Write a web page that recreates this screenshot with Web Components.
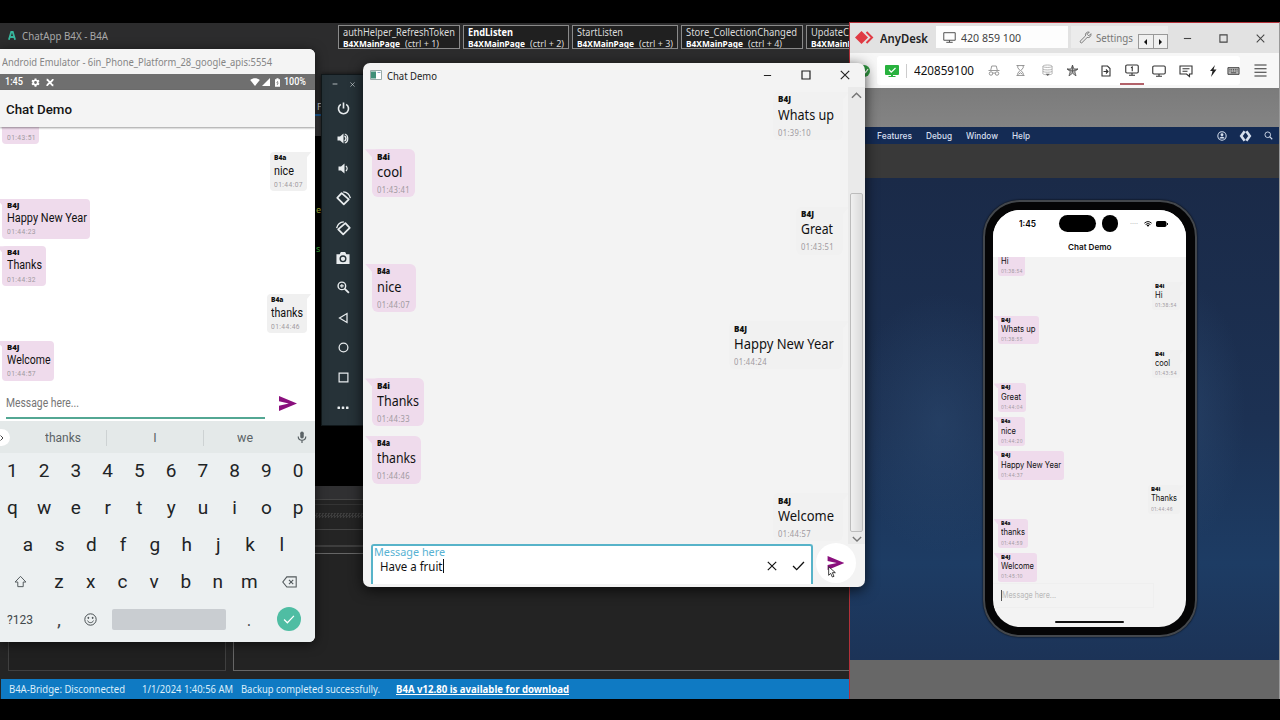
<!DOCTYPE html>
<html lang="en">
<head>
<meta charset="utf-8">
<title>Chat Demo</title>
<style>
html,body{margin:0;height:100%;background:#000;overflow:hidden}
</style>
</head>
<body>
<demo-desktop></demo-desktop>
<script>
const fits = [];
function define(name, css, html, after) {
  const tpl = document.createElement('template');
  tpl.innerHTML = `<style>*{box-sizing:border-box}:host{display:block;box-sizing:border-box}.r{display:flex;align-items:center}${css}</style>${html}`;
  customElements.define(name, class extends HTMLElement {
    connectedCallback() {
      if (this.shadowRoot) return;
      this.attachShadow({ mode: 'open' }).append(document.importNode(tpl.content, true));
      if (after) after(this, this.shadowRoot);
    }
  });
}

/* a single line of text set to a given width */
define('fit-text', `:host{display:inline-block;white-space:nowrap;flex:none}span{display:inline-block;white-space:pre;transform-origin:0 50%}`,
  `<span><slot></slot></span>`, (el) => fits.push(el));

/* icons */
const S = (vb, body, w = 1.8) => `<svg viewBox="${vb}" fill="none" stroke="currentColor" stroke-width="${w}">${body}</svg>`;
const icons = {
  gear: S('0 0 24 24', '<circle cx="12" cy="12" r="6" stroke-width="4.500"/><path stroke-width="5" d="M12 1v5M12 18v5M2.500 6.500l4 2.500M17.500 15l4 2.500M2.500 17.500l4-2.500M17.500 9l4-2.500"/>'),
  xx: S('0 0 24 24', '<path stroke-width="5.500" d="M2 3c5 1 6 5 10 9s5 8 10 9M21 2c-1 5-5 6-9 10s-8 5-9 10"/>'),
  wifi: S('0 0 24 20', '<path fill="currentColor" stroke="none" d="M12 20L0 5C7-1 17-1 24 5z"/>'),
  signal: S('0 0 20 20', '<path fill="currentColor" stroke="none" d="M20 0v20H0z"/>'),
  batt: S('0 0 14 24', '<path fill="currentColor" stroke="none" d="M4 0h6v3h4v21H0V3h4z"/><path stroke="#6f6f6f" stroke-width="2" d="M8 8l-3 5h4l-3 6"/>'),
  send: S('0 0 24 20', '<path fill="currentColor" stroke="none" d="M0 0l24 10L0 20V13l13-3L0 7z"/>'),
  mic: S('0 0 20 26', '<rect x="6.5" y="1" width="7" height="14" rx="3.5" fill="currentColor" stroke="none"/><path stroke-width="2.4" d="M2.5 11c0 10 15 10 15 0M10 18v6"/>'),
  chev: S('0 0 8 12', '<path d="M1 1l5 5-5 5"/>'),
  shift: S('0 0 24 24', '<path d="M12 2.5L2 13h5v8.500h10V13h5z"/>'),
  back: S('0 0 28 22', '<path d="M9 1.500h17.500v19H9L1.500 11zM13 7l8 8M21 7l-8 8" stroke-width="2"/>'),
  smile: S('0 0 24 24', '<circle cx="12" cy="12" r="10.500"/><path d="M6.500 14c2 5 9 5 11 0"/><circle cx="8" cy="9" r="1" fill="currentColor"/><circle cx="16" cy="9" r="1" fill="currentColor"/>'),
  check: S('0 0 14 11', '<path d="M1 5.500l4 4L13 1"/>', 1.5),
  power: S('0 0 24 24', '<path stroke-width="3" d="M7 4.500a9.300 9.300 0 1 0 10 0M12 1v11"/>'),
  vol2: S('0 0 24 22', '<path fill="currentColor" stroke="none" d="M0 7h5l7-6v20l-7-6H0z"/><path d="M14 6c4 2 4 8 0 10" stroke-width="3"/><path d="M14.500 2c8 2 8 16 0 18" stroke-width="2.500"/>'),
  vol1: S('0 0 24 22', '<path fill="currentColor" stroke="none" d="M3 7h5l7-6v20l-7-6H3z"/><path d="M18 6c3 3 3 7 0 10" stroke-width="2.500"/>'),
  rotl: S('0 0 24 24', '<path stroke-width="2.800" stroke-linejoin="round" d="M9 3.500L2 11l10.500 10.500 8-8z"/><path stroke-width="2.200" d="M11.500 1.300Q21 2 23 11.500"/>'),
  cam: S('0 0 24 22', '<path fill="currentColor" stroke="none" d="M0 4h6l2-4h8l2 4h6v18H0z"/><circle cx="12" cy="12.500" r="5.200" stroke="#263238" stroke-width="2.500"/>'),
  zoom: S('0 0 24 24', '<circle cx="9" cy="9" r="7" stroke-width="2.600"/><path d="M14 14l8 8" stroke-width="3.500"/><path d="M9 5.500v7M5.500 9h7" stroke-width="2"/>'),
  tri: S('0 0 20 24', '<path stroke-width="2.500" d="M18 3v18L3 12z"/>'),
  circ: S('0 0 20 20', '<circle cx="10" cy="10" r="8" stroke-width="2.300"/>'),
  sq: S('0 0 20 20', '<path stroke-width="2.200" d="M2 2h16v16H2z"/>'),
  dots: S('0 0 24 6', '<g fill="currentColor" stroke="none"><rect x="1" y="1" width="5" height="5" rx="1"/><rect x="9.500" y="1" width="5" height="5" rx="1"/><rect x="18" y="1" width="5" height="5" rx="1"/></g>'),
  min: S('0 0 10 10', '<path d="M1 5h8" stroke-width="1.200"/>'),
  max: S('0 0 10 10', '<path d="M1 1h8v8H1z" stroke-width="1.200"/>'),
  x: S('0 0 10 10', '<path d="M.8.8l8.400 8.400M9.200.8L.8 9.200" stroke-width="1.150"/>'),
  app: S('0 0 12 10', '<path fill="#fff" stroke="#9aaba8" stroke-width="1" d="M.5.5h11v9H.5z"/><path fill="#3f9078" stroke="none" d="M1 1.500h5v7H1z"/><path stroke="#89a7c4" stroke-width="1" d="M7.500 2.500h3"/>'),
  up: S('0 0 12 7', '<path d="M1 6l5-5 5 5" stroke-width="1.600"/>'),
  down: S('0 0 12 7', '<path d="M1 1l5 5 5-5" stroke-width="1.600"/>'),
  any: S('0 0 38 26', '<path fill="#e03a43" stroke="none" d="M13 0l13 13-13 13L0 13z"/><path stroke="#e03a43" stroke-width="4" d="M23 2l11 11-11 11"/>'),
  mon: S('0 0 28 24', '<path stroke-width="2" d="M1.500 1.500h25V18h-25zM14 18v4M7 22.500h14"/>'),
  mon1: S('0 0 28 24', '<path stroke-width="2.200" d="M4 2h20q2.500 0 2.500 2.500v11Q26.500 18 24 18H4q-2.500 0-2.500-2.500v-11Q1.500 2 4 2zM14 18v4M8 22.500h12M12 7.500L14.500 6v8.500"/>'),
  mon2: S('0 0 28 24', '<path stroke-width="2.200" d="M4 2h20q2.500 0 2.500 2.500v11Q26.500 18 24 18H4q-2.500 0-2.500-2.500v-11Q1.500 2 4 2zM14 18v4M8 22.500h12"/>'),
  wrench: S('0 0 24 24', '<path d="M2 19L12 9c-1-4 2-8 7-7l-4 4 3 3 4-4c1 5-3 8-7 7L5 22q-3 0-3-3z"/>'),
  gmon: S('0 0 28 24', '<path fill="#28b23e" stroke="none" d="M2 0h24q2 0 2 2v16q0 2-2 2H16v2h5v2H7v-2h5v-2H2q-2 0-2-2V2q0-2 2-2z"/><path stroke="#fff" stroke-width="2.400" d="M8 9.500l4.500 5L21 6"/>'),
  gball: S('0 0 24 24', '<circle cx="12" cy="12" r="12" fill="#2f9a40" stroke="none"/><path stroke="#fff" stroke-width="2.500" d="M11 11l4 4 5-7"/>'),
  spy: S('0 0 24 22', '<path stroke-width="1.700" d="M1 11h22M5.500 10L7.500 2h9l2 8M9 17c1-1.500 5-1.500 6 0"/><circle cx="6" cy="17" r="3.500"/><circle cx="18" cy="17" r="3.500"/>'),
  hour: S('0 0 20 24', '<path stroke-width="1.700" d="M1 1h18M1 23h18M4 1v5l5 6-5 6v5M16 1v5l-5 6 5 6v5M6 20l4-3 4 3"/>'),
  db: S('0 0 24 26', '<path stroke-width="1.600" d="M2 4c0-4 20-4 20 0v16c0 3-20 3-20 0zM2 4c0 3 20 3 20 0M2 9.500c0 3 20 3 20 0M2 14.500c0 3 20 3 20 0"/><path fill="#666" stroke="none" d="M8 20h9l-4.500 5z"/>'),
  star: S('0 0 24 24', '<path fill="#b5b5b5" stroke="#555" stroke-width="1.500" d="M12 2l2.700 7.200H22l-5.800 4.600L18.500 22 12 17l-6.500 5 2.300-8.200L2 9.200h7.300z"/><path stroke-width="1.300" d="M12 2v14M2 9.200l10 4 10-4"/>'),
  file: S('0 0 20 24', '<path stroke-width="2.200" d="M2 2h11l5 5v15H2zM5 13h9M10 9l4 4-4 4"/>'),
  chat: S('0 0 28 24', '<path stroke-width="2.200" d="M2 2h24v16h-5v5l-6-5H2zM7 7.500h14M7 12.500h10"/>'),
  bolt: S('0 0 16 24', '<path fill="#222" stroke="none" d="M12 0L2 12h5L4 24 15 9H9z"/>'),
  kbd: S('0 0 28 18', '<path stroke-width="2" fill="#bbb" d="M1.500 1.500h25v15h-25z"/><path stroke-width="2" stroke-dasharray="2 2" d="M5 5.500h19M5 9h19"/><path d="M8 13h12"/>'),
  menu: S('0 0 14 14', '<path stroke-width="1.100" d="M.5 1h13M.5 5h13M.5 9h13M.5 13h13"/>'),
  user: S('0 0 24 24', '<circle cx="12" cy="12" r="10" stroke-width="2.500"/><circle cx="12" cy="9" r="3.500" fill="currentColor" stroke="none"/><path fill="currentColor" stroke="none" d="M5.500 18c1-6 12-6 13 0z"/>'),
  kite: S('0 0 28 28', '<path stroke-width="6" d="M12 3L4 14l8 11M16 3l8 11-8 11"/>'),
  find: S('0 0 24 24', '<circle cx="10" cy="10" r="7.500" stroke-width="2.400"/><path stroke-width="3" d="M15 15l7 7"/>'),
  iwifi: S('0 0 20 14', '<path fill="currentColor" stroke="none" d="M10 14L6.500 10.500q3.500-3 7 0z"/><path stroke-width="2.400" d="M1 5q9-8 18 0M4 8.300q6-5 12 0"/>'),
  ibatt: S('0 0 24 12', '<rect x="0" y="0" width="21" height="12" rx="3.500" fill="currentColor" stroke="none"/><path d="M23 4v4"/>'),
  arrow: S('0 0 12 18', '<path fill="#fff" stroke="#222" stroke-width="1.300" d="M1 1v13l3-3 2.500 5.500 2.500-1L6.500 10H11z"/>'),
  logo: S('0 0 16 18', '<path stroke-width="3.600" d="M1.800 17.500L6.500 2h3l4.700 15.500M4.500 12h7"/>')
};
define('x-icon', `:host{display:block;flex:none}svg{display:block;width:100%;height:100%;overflow:visible}`, ``, (el, root) => {
  const t = document.createElement('template');
  t.innerHTML = icons[el.getAttribute('name')];
  root.append(t.content);
  if (el.hasAttribute('w')) el.style.width = el.getAttribute('w') + 'px';
  if (el.hasAttribute('h')) el.style.height = el.getAttribute('h') + 'px';
});

/* chat bubble: sizes come from custom properties of the list it is in */
define('chat-bubble', `
:host{height:var(--bh);flex:none;align-self:flex-start;margin-left:var(--ml);position:relative;background:var(--pink,#efdbec);border-radius:var(--br);padding:var(--pt) 0 0 var(--pl);color:#111}
:host([own]){align-self:flex-end;margin:0 var(--mr) 0 0;background:var(--own);padding-left:var(--plo,var(--pl))}
.tail{position:absolute;top:0;left:calc(var(--tail) * -1);width:calc(var(--tail) + 5px);height:calc(var(--tail) + 1px);background:inherit;clip-path:polygon(0 0,100% 0,100% 100%,var(--tail) 100%)}
:host([own]) .tail{left:auto;right:calc(var(--tail) * -1);clip-path:polygon(0 0,100% 0,5px 100%,0 100%)}
div{display:flex;align-items:center}
.n{height:var(--nh);font:800 var(--ns)/1 "Open Sans",sans-serif}
.m{height:var(--mh);font-size:var(--ms);line-height:1}
.t{height:var(--th);font:var(--ts)/1 var(--tf,"Noto Sans",sans-serif);letter-spacing:.4px;color:#a09aa0}`,
`<i class="tail"></i><div class="n"></div><div class="m"></div><div class="t"></div>`, (el, root) => {
  const a = n => el.getAttribute(n);
  el.style.width = a('bw') + 'px';
  const st = getComputedStyle(el);
  const put = (c, text, w) => root.querySelector(c).innerHTML = `<fit-text w="${w}">${text}</fit-text>`;
  put('.n', a('who'), parseFloat(st.getPropertyValue('--nw')));
  put('.m', a('msg'), a('mw'));
  put('.t', a('time'), parseFloat(st.getPropertyValue('--tw')));
});

define('status-bar', `:host{height:20px;background:#0f7ac3;color:#dceefa;font:10.500px/20px "Noto Sans","Open Sans",sans-serif;display:flex;padding-left:8px;margin-left:1px}
a{color:#fff;font-weight:700;text-decoration:underline}`,
`<fit-text w="116">B4A-Bridge: Disconnected</fit-text><fit-text w="91" style="margin-left:17px">1/1/2024 1:40:56 AM</fit-text><fit-text w="139" style="margin-left:8px">Backup completed successfully.</fit-text><fit-text w="173" style="margin-left:16px"><a>B4A v12.80 is available for download</a></fit-text>`);

define('call-tab', `:host{height:24px;border:1px solid #8a8a8a;background:#202020;color:#dcdcdc;padding:0 0 0 4px;overflow:hidden;flex:none;font:10.500px/13px "Noto Sans","Open Sans",sans-serif}
div{height:12px;line-height:13px;white-space:nowrap}.b{font-size:9.500px;display:flex;gap:5px;height:11px;line-height:12px}b{color:#fff}`,
`<div class="a"></div><div class="b"></div>`, (el, root) => {
  const a = n => el.getAttribute(n);
  el.style.width = a('bw') + 'px';
  const t = a('bold') !== null ? `<b>${a('name')}</b>` : a('name');
  root.querySelector('.a').innerHTML = `<fit-text w="${a('nw')}">${t}</fit-text>`;
  root.querySelector('.b').innerHTML = `<fit-text w="57"><b>B4XMainPage</b></fit-text>` + (a('key') ? `<fit-text w="34">(ctrl + ${a('key')})</fit-text>` : '');
});

define('ide-window', `:host{width:849px;height:676px;background:#242424;overflow:hidden;display:flex;flex-direction:column;font-family:"Noto Sans","Open Sans",sans-serif}
.top{height:79px;background:#2c2c2d;padding-left:8px;display:flex;align-items:flex-start;color:#a9a9a9;font-size:11px;line-height:14px;flex:none}
.ttl{width:330px;flex:none;padding-top:6px;display:flex;gap:6px}
.tabs{display:flex;gap:3px;padding-top:2px}
.strip{height:34px;background:linear-gradient(#2c2c2d 14px,#3a3a3c 14px);padding-left:317px;font-size:9px;line-height:9px;color:#ddd;flex:none}
.strip div{height:14px;border-bottom:2px solid #1c5f9c;margin-left:-2px;padding-left:2px}
.ed{height:350px;background:#000;font-size:9px;flex:none;padding:68px 0 0 316px}
.ed p{margin:0 0 27px;height:12px;line-height:12px}
.out{flex:1;background:#242424;display:flex;flex-direction:column}
.l1{height:14px;background:#303032;border-bottom:1px solid #454545}
.l2{height:5px;border-bottom:1px solid #343434}
.l3{height:5px;margin-top:8px;margin-bottom:2px;background:repeating-conic-gradient(#3d3d3d 0 25%,#262626 0 50%) 0 0/3px 3px}
.l4{height:10px;border-bottom:1px solid #444}.l5{height:17px;border-bottom:2px solid #3e3e3e}.l6{height:7px;border-bottom:1px solid #666}
.boxes{flex:1;display:flex;gap:7px;padding:0 0 8px 8px;border-bottom:0}
.b1{width:218px;border:1px solid #3f3f3f;background:#202020}.b2{flex:1;border:1px solid #666;border-right:0;border-top:0;background:#232323}`,
`<div class="top"><div class="ttl"><x-icon name="logo" w="8" h="9" style="color:#37b79d;margin-top:2px"></x-icon><fit-text w="86">ChatApp B4X - B4A</fit-text></div>
<div class="tabs"><call-tab name="authHelper_RefreshToken" nw="112" bw="122" key="1"></call-tab><call-tab name="EndListen" bold nw="45" bw="106" key="2"></call-tab><call-tab name="StartListen" nw="46" bw="106" key="3"></call-tab><call-tab name="Store_CollectionChanged" nw="111" bw="122" key="4"></call-tab><call-tab name="UpdateC" nw="38" bw="122"></call-tab></div></div>
<div class="strip"><div>F</div></div>
<div class="ed"><p style="color:#c3c93f">e</p><p style="color:#3fc03f">s</p></div>
<div class="out"><div class="l1"></div><div class="l2"></div><div class="l3"></div><div class="l4"></div><div class="l5"></div><div class="l6"></div><div class="boxes"><div class="b1"></div><div class="b2"></div></div></div>
<status-bar></status-bar>`);

define('key-row', `:host{display:flex;height:36.800px;align-items:center;font:19px/36px Roboto,sans-serif;color:#1e2426}span{width:31.750px;text-align:center;flex:none}`,
`<slot></slot>`, (el, root) => {
  const keys = el.getAttribute('keys').split('').map(k => `<span>${k}</span>`).join('');
  root.querySelector('slot').insertAdjacentHTML('beforebegin', `<slot name="pre"></slot>${keys}`);
});

define('android-phone', `:host{width:315px;height:593px;background:#fff;border-radius:0 6px 6px 0;overflow:hidden;display:flex;flex-direction:column;font-family:Roboto,sans-serif;box-shadow:0 2px 12px #0009}
.cap{height:25px;background:#f4f4f4;padding:6px 0 0 2px;font:10.500px/14px "Noto Sans","Open Sans",sans-serif;color:#858585;flex:none}
.stat{height:16px;background:#6f6f6f;color:#fff;font-weight:500;font-size:10.500px;line-height:16px;padding:0 9px 0 5px;flex:none}
.bar{height:37px;background:#f4f4f4;padding-left:6px;font:500 13.500px/38px Roboto,sans-serif;color:#151515;box-shadow:0 1px 2px #0006;z-index:1;flex:none}
.chat{height:261px;overflow:hidden;display:flex;flex-direction:column;justify-content:flex-end;gap:7.600px;padding-bottom:7.500px;flex:none;
--bh:39.700px;--ml:2px;--mr:8.500px;--br:4px;--own:#f0f0f0;--pt:2px;--pl:5px;--plo:4px;--tail:5px;--nh:10px;--ns:6.500px;--nw:12.500;--mh:14px;--ms:12px;--th:15.500px;--ts:6.500px;--tw:29;--tf:Roboto,sans-serif}
.in{height:34px;padding-left:6px;align-items:stretch;flex:none}
.f{width:259px;height:31px;border-bottom:2px solid #53a793;font-size:12px;line-height:31px;color:#757575}
.sug{height:32px;background:#e4e9e9;color:#5b6366;font-size:12.500px;flex:none;margin-top:-1px;z-index:1;padding-top:1px}
.sug i{width:1px;height:16px;background:#cdd2d3}.w{width:96px;display:flex;justify-content:center}
.go{width:10px;height:17px;border-radius:0 9px 9px 0;background:#fff;display:flex;align-items:center;color:#333}
.kb{flex:1;background:#ecf0f1;padding:0}
.last{height:38px;color:#42494c}
.sp{width:114px;height:21px;background:#c9cdd1;border-radius:2px;margin-left:15px}
.ok{width:24px;height:24px;border-radius:50%;background:#4fbda3;color:#fff;display:flex;align-items:center;justify-content:center;margin-left:26px}`,
`<div class="cap"><fit-text w="270">Android Emulator - 6in_Phone_Platform_28_google_apis:5554</fit-text></div>
<div class="stat r"><fit-text w="18">1:45</fit-text><x-icon name="gear" w="9" h="9" style="margin-left:8px"></x-icon><x-icon name="xx" w="8" h="9" style="margin-left:6px"></x-icon><x-icon name="wifi" w="10" h="8" style="margin-left:auto"></x-icon><x-icon name="signal" w="8" h="8" style="margin-left:2px"></x-icon><x-icon name="batt" w="5" h="9" style="margin:0 4px 0 5px"></x-icon><fit-text w="22">100%</fit-text></div>
<div class="bar"><fit-text w="66">Chat Demo</fit-text></div>
<div class="chat">
<chat-bubble who="B4i" msg="Great" time="01:43:51" bw="36.5" mw="29"></chat-bubble>
<chat-bubble own who="B4a" msg="nice" time="01:44:07" bw="37" mw="20"></chat-bubble>
<chat-bubble who="B4J" msg="Happy New Year" time="01:44:23" bw="88" mw="80"></chat-bubble>
<chat-bubble who="B4i" msg="Thanks" time="01:44:32" bw="44" mw="35"></chat-bubble>
<chat-bubble own who="B4a" msg="thanks" time="01:44:46" bw="39.5" mw="32"></chat-bubble>
<chat-bubble who="B4J" msg="Welcome" time="01:44:57" bw="52" mw="43.500"></chat-bubble></div>
<div class="in r"><div class="f"><fit-text w="73">Message here...</fit-text></div><x-icon name="send" w="18" h="15" style="color:#8a0f7d;margin:8px 0 0 14px"></x-icon></div>
<div class="sug r"><div class="go"><x-icon name="chev" w="4" h="8"></x-icon></div><div class="w" style="padding-left:9px"><fit-text w="36">thanks</fit-text></div><i></i><div class="w">I</div><i></i><div class="w" style="width:82px"><fit-text w="16">we</fit-text></div><x-icon name="mic" w="10" h="13" style="margin-left:11px"></x-icon></div>
<div class="kb"><key-row keys="1234567890" style="margin-left:-3.500px"></key-row><key-row keys="qwertyuiop" style="margin-left:-3.500px"></key-row><key-row keys="asdfghjkl" style="margin-left:12px"></key-row>
<key-row keys="zxcvbnm"><x-icon slot="pre" name="shift" w="13" h="13" style="margin:0 16.500px 0 13.500px;color:#51585b"></x-icon><x-icon name="back" w="15" h="12" style="margin-left:17px;color:#51585b"></x-icon></key-row>
<div class="r last"><fit-text w="26" style="margin-left:7px;font-size:12.500px">?123</fit-text><fit-text w="4" style="margin-left:24px;font-size:18px">,</fit-text><x-icon name="smile" w="13" h="13" style="margin-left:23px"></x-icon><div class="sp"></div><fit-text w="4" style="margin-left:21px;font-size:18px">.</fit-text><div class="ok"><x-icon name="check" w="12" h="9"></x-icon></div></div></div>`);

define('emulator-tools', `:host{width:44px;height:352px;background:#263238;border:1px solid #11181b;color:#e8ecee;box-shadow:0 0 5px #000a}
.c{display:flex;justify-content:center;gap:12px;height:18.500px;align-items:center}
.i{height:29.900px;display:flex;align-items:center;justify-content:center}`,
`<div class="c"><x-icon name="min" w="6" h="6"></x-icon><x-icon name="x" w="5" h="5"></x-icon></div>` +
[['power',13,13],['vol2',13,11],['vol1',12,11],['rotl',15,15],['rotl',15,15,'transform:scaleX(-1)'],['cam',14,12],['zoom',13,13],['tri',10,12],['circ',11,11],['sq',11,11],['dots',12,3]]
.map(([n, w, h, s = '']) => `<div class="i"><x-icon name="${n}" w="${w}" h="${h}" style="${s}"></x-icon></div>`).join(''));

define('chat-window', `:host{width:502px;height:523.500px;background:#f3f3f3;border-radius:7px;overflow:hidden;box-shadow:0 3px 14px #000b;display:flex;flex-direction:column;font-family:"Noto Sans","Open Sans",sans-serif}
.cap{height:24px;padding:0 15px 0 7px;font-size:11px;color:#222;flex:none}
.mid{height:457px;display:flex;flex:none}
.chat{width:485px;overflow:hidden;display:flex;flex-direction:column;justify-content:flex-end;gap:9.300px;padding-bottom:3px;
--bh:48px;--ml:9px;--mr:5.500px;--br:6px;--own:#f1f1f1;--pt:2px;--pl:5px;--tail:7px;--nh:10px;--ns:9px;--nw:13;--mh:20px;--ms:14.500px;--th:18px;--ts:8.500px;--tw:33;--tf:"Noto Sans",sans-serif}
.sb{width:17px;background:#eaeaea;display:flex;flex-direction:column;align-items:center;padding:5px 0 2px;color:#777}
.th{width:13px;height:339px;background:linear-gradient(90deg,#f0f0f0,#dadada);border:1px solid #bcbcbc;border-radius:2px;margin:94px 0 auto}
.in{height:42px;padding-left:8px;display:flex;position:relative}
.f{width:442px;height:39.500px;border:2px solid #57b3c9;border-bottom:0;border-radius:3px 3px 0 0;background:#fff;display:flex;color:#111;padding-right:6px}
.tx{flex:1;font-size:13px;line-height:14px;display:flex;flex-direction:column}
.lb{color:#58b2d3;font-size:11.500px;height:12px;line-height:11px;padding-left:1px}
.vl{display:flex;padding-left:7px;align-items:center;height:16px}
.vl u{width:1px;height:14px;background:#111}
.snd{width:40px;height:40px;border-radius:50%;background:#fff;margin:-1px 0 0 3px;display:flex;align-items:center;justify-content:center;color:#8a0f7d}
.ptr{position:absolute;left:464.500px;top:22px}`,
`<div class="cap r"><x-icon name="app" w="12" h="10"></x-icon><fit-text w="50" style="margin-left:5px">Chat Demo</fit-text><x-icon name="min" w="9" h="9" style="margin-left:auto"></x-icon><x-icon name="max" w="10" h="10" style="margin-left:29px"></x-icon><x-icon name="x" w="10" h="10" style="margin-left:29px"></x-icon></div>
<div class="mid"><div class="chat">
<chat-bubble own who="B4J" msg="Whats up" time="01:39:10" bw="70" mw="56"></chat-bubble>
<chat-bubble who="B4i" msg="cool" time="01:43:41" bw="43" mw="25.500"></chat-bubble>
<chat-bubble own who="B4J" msg="Great" time="01:43:51" bw="47" mw="32"></chat-bubble>
<chat-bubble who="B4a" msg="nice" time="01:44:07" bw="44" mw="24.500"></chat-bubble>
<chat-bubble own who="B4J" msg="Happy New Year" time="01:44:24" bw="114" mw="100"></chat-bubble>
<chat-bubble who="B4i" msg="Thanks" time="01:44:33" bw="52" mw="42"></chat-bubble>
<chat-bubble who="B4a" msg="thanks" time="01:44:46" bw="49" mw="39"></chat-bubble>
<chat-bubble own who="B4J" msg="Welcome" time="01:44:57" bw="70" mw="56"></chat-bubble></div>
<div class="sb"><x-icon name="up" w="11" h="7"></x-icon><div class="th"></div><x-icon name="down" w="10" h="6"></x-icon></div></div>
<div class="in"><div class="f"><div class="tx"><div class="lb"><fit-text w="71">Message here</fit-text></div><div class="vl"><fit-text w="62.500">Have a fruit</fit-text><u></u></div></div><x-icon name="x" w="10" h="10" style="margin-top:15px"></x-icon><x-icon name="check" w="13" h="10" style="margin:15px 0 0 15px"></x-icon></div><div class="snd"><x-icon name="send" w="18" h="14"></x-icon></div><x-icon class="ptr" name="arrow" w="8" h="12"></x-icon></div>`);

define('ios-phone', `:host{width:214px;height:437px;border-radius:37px;background:#050506;border:2px solid #43474c;padding:7.500px 9px 8px 8px;font-family:Inter,sans-serif;box-shadow:0 0 2px #000}
.s{height:100%;border-radius:27px;overflow:hidden;background:#f3f3f3;display:flex;flex-direction:column}
.h{height:47.500px;background:#fff;flex:none}
.st{height:27px;font-weight:600;font-size:8.500px;padding:1px 18px 0 26px}
.st b{background:#000;height:17px;border-radius:9px}
.tt{display:flex;justify-content:center;font-weight:600;font-size:8px;line-height:18px;padding-top:1px;color:#111}
.chat{height:325.500px;overflow:hidden;display:flex;flex-direction:column;justify-content:flex-end;gap:5.300px;padding-bottom:1px;flex:none;
--bh:28.600px;--ml:4.500px;--mr:6px;--br:3px;--own:#f0f0f0;--pt:1px;--pl:3px;--tail:4px;--nh:7px;--ns:5px;--nw:9.500;--mh:11px;--ms:8.300px;--th:10px;--ts:5px;--tw:22;--tf:Inter,sans-serif}
.m{width:161px;height:25px;padding-left:8px;color:#b9b9b9;font-size:8.500px;border:1px solid #efefef;border-left:0}
.m u{width:1px;height:11px;background:#555}
.hb{width:69px;height:2px;border-radius:2px;background:#111;margin:13px auto 0}`,
`<div class="s"><div class="h"><div class="st r"><fit-text w="17">1:45</fit-text><b style="width:38px;margin-left:23px"></b><b style="width:17px;margin-left:6px"></b><fit-text w="8" style="margin-left:12px;color:#bbb;font-size:6px">····</fit-text><x-icon name="iwifi" w="8" h="6" style="margin-left:6px"></x-icon><x-icon name="ibatt" w="12" h="6" style="margin-left:4px"></x-icon></div><div class="tt"><fit-text w="43.500">Chat Demo</fit-text></div></div>
<div class="chat">
<chat-bubble who="B4J" msg="Hi" time="01:38:54" bw="27" mw="7.500"></chat-bubble>
<chat-bubble own who="B4i" msg="Hi" time="01:38:54" bw="28" mw="7.500"></chat-bubble>
<chat-bubble who="B4J" msg="Whats up" time="01:38:55" bw="41" mw="34.500"></chat-bubble>
<chat-bubble own who="B4i" msg="cool" time="01:43:54" bw="28" mw="15"></chat-bubble>
<chat-bubble who="B4J" msg="Great" time="01:44:04" bw="28" mw="20"></chat-bubble>
<chat-bubble who="B4a" msg="nice" time="01:44:20" bw="27" mw="15"></chat-bubble>
<chat-bubble who="B4J" msg="Happy New Year" time="01:44:37" bw="66" mw="60"></chat-bubble>
<chat-bubble own who="B4i" msg="Thanks" time="01:44:46" bw="32" mw="26"></chat-bubble>
<chat-bubble who="B4a" msg="thanks" time="01:44:59" bw="30" mw="24"></chat-bubble>
<chat-bubble who="B4J" msg="Welcome" time="01:45:10" bw="39" mw="33"></chat-bubble></div>
<div class="m r"><u></u><fit-text w="54">Message here...</fit-text></div><div class="hb"></div></div>`);

define('anydesk-window', `:host{width:431px;height:677px;border:1px solid #b3313a;border-right-color:#999;border-bottom:0;display:flex;flex-direction:column;font-family:"Noto Sans","Open Sans",sans-serif;background:#1b2c4a}
:host>div{flex:none}
.tt{height:30px;background:#e2e2e2;padding-left:5px;color:#444;font-size:11px}
.tab{height:22px;background:#fdfdfd;margin-bottom:2px;display:flex;align-items:center}
.ar{width:15.500px;height:15px;border:1px solid #999;background:#f0f0f0;margin:9px -1px 0 0;display:flex;align-items:center;justify-content:center}
.ar i{border:3px solid transparent;border-left:0;border-right:3px solid #111}.ar+.ar i{transform:scaleX(-1)}
.tb{height:35px;background:#f7f7f7;padding:0 0 0 10px;color:#333}
.pill{width:363px;height:29px;background:#fff;border-radius:3px;display:flex;align-items:center;padding-left:9px;margin-left:7px;flex:none}
.act{height:29px;width:24px;margin:0 -5px 0 9px;padding-top:8px;border-bottom:2px solid #b3626a;display:flex;justify-content:center}
.g1{height:39px;background:linear-gradient(#7b7b7b,#848484)}
.mb{height:17px;background:#142b54;color:#d6dfee;font:500 9px/17px Inter,sans-serif;padding:0 6px 0 27px}
.g2{height:34px;background:#393939}
.bg{height:482px;background:radial-gradient(ellipse 60px 130px at 335px 235px,#31527a66,transparent),radial-gradient(ellipse 90px 130px at 90px 245px,#31527a66,transparent),linear-gradient(#1a2a48,#1c3153 50%,#1d3c64 80%,#1c3357);padding:22px 0 0 133px}
.g3{flex:1!important;background:#676767}`,
`<div class="tt r"><x-icon name="any" w="19" h="13" style="margin-bottom:2px"></x-icon><fit-text w="48" style="margin-left:6px;font-size:12px;color:#222;font-weight:600">AnyDesk</fit-text>
<div class="tab" style="width:132px;margin-left:8px;padding-left:7px"><x-icon name="mon" w="13" h="11"></x-icon><fit-text w="60" style="margin-left:5px">420 859 100</fit-text></div>
<div class="tab" style="width:97px;margin-left:3px;padding-left:8px;background:#ececec;color:#777"><x-icon name="wrench" w="13" h="13"></x-icon><fit-text w="37" style="margin-left:4px">Settings</fit-text><div class="ar" style="margin-left:5px"><i></i></div><div class="ar"><i></i></div></div>
<x-icon name="min" w="9" h="9" style="margin-left:15px"></x-icon><x-icon name="max" w="9" h="9" style="margin-left:27px"></x-icon><x-icon name="x" w="9" h="9" style="margin-left:28px"></x-icon></div>
<div class="tb r"><x-icon name="gball" w="12" h="12" style="margin-left:-2px"></x-icon><div class="pill"><x-icon name="gmon" w="14" h="12" style="margin-left:-1px"></x-icon><i style="width:1px;height:14px;background:#ccc;margin:0 7px"></i><fit-text w="60" style="font-size:12px;color:#111">420859100</fit-text>
<x-icon name="spy" w="12" h="11" style="margin-left:14px;color:#888"></x-icon><x-icon name="hour" w="9" h="13" style="margin-left:16px;color:#777"></x-icon><x-icon name="db" w="11" h="13" style="margin-left:17px;color:#999"></x-icon><x-icon name="star" w="13" h="13" style="margin-left:13px;color:#444"></x-icon><x-icon name="file" w="10" h="12" style="margin-left:22px"></x-icon><div class="act"><x-icon name="mon1" w="14" h="12"></x-icon></div><x-icon name="mon2" w="14" h="12" style="margin-left:13px"></x-icon><x-icon name="chat" w="14" h="12" style="margin-left:13px"></x-icon><x-icon name="bolt" w="8" h="12" style="margin-left:16px"></x-icon><x-icon name="kbd" w="13" h="8" style="margin-left:10px"></x-icon></div><x-icon name="menu" w="13" h="13" style="margin-left:14px"></x-icon></div>
<div class="g1"></div>
<div class="mb r"><fit-text w="35">Features</fit-text><fit-text w="26" style="margin-left:14px">Debug</fit-text><fit-text w="32" style="margin-left:14px">Window</fit-text><fit-text w="18" style="margin-left:14px">Help</fit-text><x-icon name="user" w="10" h="10" style="margin-left:auto"></x-icon><x-icon name="kite" w="13" h="12" style="margin-left:12px"></x-icon><x-icon name="find" w="9" h="9" style="margin-left:12px"></x-icon></div>
<div class="g2"></div><div class="bg"><ios-phone></ios-phone></div><div class="g3"></div>`);

/* the desktop holds free-floating windows */
define('demo-desktop', `:host{position:relative;width:1280px;height:720px;overflow:hidden;background:#000}
:host>*{position:absolute}
ide-window{left:0;top:23px}anydesk-window{left:849px;top:22px}emulator-tools{left:321px;top:74px}chat-window{left:363px;top:63px}android-phone{left:0;top:49px}`,
`<ide-window></ide-window><anydesk-window></anydesk-window><emulator-tools></emulator-tools><chat-window></chat-window><android-phone></android-phone>`);

/* scale every fitted line to its width */
for (const el of fits) {
  const w = parseFloat(el.getAttribute('w')), span = el.shadowRoot.querySelector('span');
  const n = span.getBoundingClientRect().width;
  if (w && n) { span.style.transform = `scaleX(${w / n})`; el.style.width = w + 'px'; }
}
</script>
</body>
</html>
